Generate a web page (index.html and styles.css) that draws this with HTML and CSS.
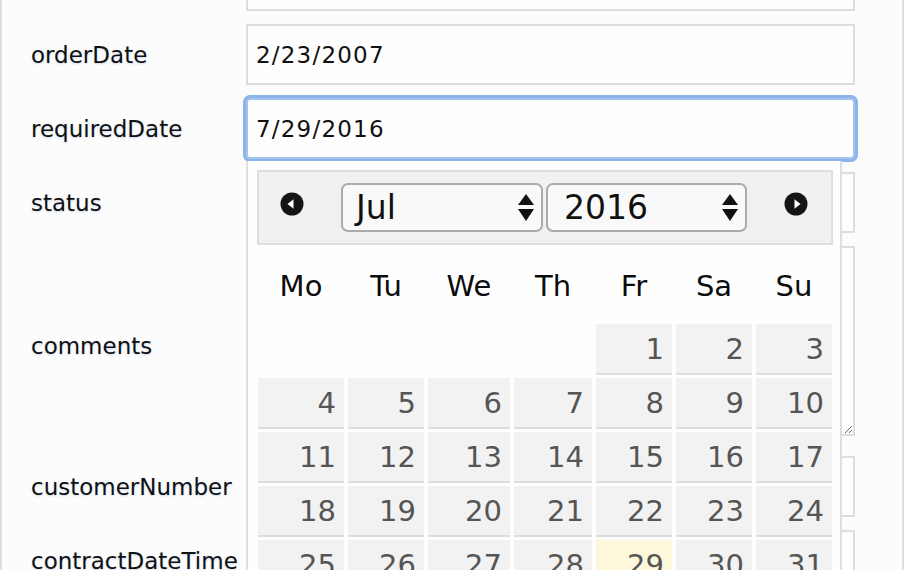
FILE: index.html
```html
<!DOCTYPE html>
<html lang="en">
<head>
<meta charset="utf-8">
<title>Order form with date picker</title>
<link rel="stylesheet" href="styles.css">
</head>
<body>
<div class="page">
  <form class="form">
    <div class="row"><label class="label"></label><input class="field" value=""></div>
    <div class="row"><label class="label">orderDate</label><input class="field" value="2/23/2007"></div>
    <div class="row"><label class="label">requiredDate</label><input class="field focused" value="7/29/2016"></div>
    <div class="row"><label class="label">status</label><input class="field" value=""></div>
    <div class="row row-tall"><label class="label label-area">comments</label><textarea class="field area"></textarea></div>
    <div class="row"><label class="label">customerNumber</label><input class="field" value=""></div>
    <div class="row"><label class="label">contractDateTime</label><input class="field" value=""></div>
  </form>

  <div class="datepicker">
    <div class="dp-header">
      <span class="nav nav-prev">
        <svg width="24" height="24" viewBox="0 0 24 24"><circle cx="12" cy="12" r="11.5" fill="#151515"/><polygon points="7.5,12 13.5,7.2 13.5,16.8" fill="#fff"/></svg>
      </span>
      <div class="select select-month"><span>Jul</span>
        <svg width="16" height="27" viewBox="0 0 16 27"><polygon points="8,0 16,11 0,11" fill="#111"/><polygon points="0,15 16,15 8,27" fill="#111"/></svg>
      </div>
      <div class="select select-year"><span>2016</span>
        <svg width="16" height="27" viewBox="0 0 16 27"><polygon points="8,0 16,11 0,11" fill="#111"/><polygon points="0,15 16,15 8,27" fill="#111"/></svg>
      </div>
      <span class="nav nav-next">
        <svg width="24" height="24" viewBox="0 0 24 24"><circle cx="12" cy="12" r="11.5" fill="#151515"/><polygon points="16.5,12 10.5,7.2 10.5,16.8" fill="#fff"/></svg>
      </span>
    </div>
    <div class="weekdays">
      <span>Mo</span><span>Tu</span><span>We</span><span>Th</span><span>Fr</span><span>Sa</span><span>Su</span>
    </div>
    <div class="days">
      <span class="day empty"></span><span class="day empty"></span><span class="day empty"></span><span class="day empty"></span>
      <span class="day">1</span><span class="day">2</span><span class="day">3</span>
      <span class="day">4</span><span class="day">5</span><span class="day">6</span><span class="day">7</span><span class="day">8</span><span class="day">9</span><span class="day">10</span>
      <span class="day">11</span><span class="day">12</span><span class="day">13</span><span class="day">14</span><span class="day">15</span><span class="day">16</span><span class="day">17</span>
      <span class="day">18</span><span class="day">19</span><span class="day">20</span><span class="day">21</span><span class="day">22</span><span class="day">23</span><span class="day">24</span>
      <span class="day">25</span><span class="day">26</span><span class="day">27</span><span class="day">28</span><span class="day today">29</span><span class="day">30</span><span class="day">31</span>
    </div>
  </div>
</div>
</body>
</html>
```
FILE: styles.css
```css
html, body {
  margin: 0;
  padding: 0;
  overflow: hidden;
  background: #fcfcfc;
}

.page {
  position: relative;
  width: 904px;
  height: 570px;
  box-sizing: border-box;
  border-left: 2px solid #dedede;
  border-right: 2px solid #dedede;
  background: #fcfcfc;
  overflow: hidden;
  font-family: "DejaVu Sans", "Liberation Sans", sans-serif;
  color: #111;
}

.form {
  display: flex;
  flex-direction: column;
  gap: 13px;
  margin: -50px 0 0 0;
  padding-left: 29px;
}

.row {
  display: flex;
  align-items: center;
}

.row-tall {
  margin-bottom: 7px;
}

.label {
  flex: none;
  width: 215px;
  font-size: 23px;
  color: #111;
  text-shadow: 0 1px 2px rgba(110, 150, 205, 0.35);
}

.label-area {
  margin-top: 9px;
}

.field {
  flex: none;
  width: 609px;
  height: 61px;
  box-sizing: border-box;
  margin: 0;
  padding: 1px 8px 0 8px;
  border: 2px solid #dddddd;
  border-radius: 0;
  background: #fefefe;
  font-family: "DejaVu Sans", "Liberation Sans", sans-serif;
  font-size: 23px;
  letter-spacing: 1.2px;
  color: #111;
  outline: none;
}

.field.focused {
  border-color: #a4c4ee;
  border-radius: 4px;
  box-shadow: 0 0 0 3px #8cb4e8;
}

.area {
  height: 190px;
  resize: vertical;
}

.datepicker {
  position: absolute;
  left: 244px;
  top: 161px;
  width: 596px;
  box-sizing: border-box;
  border: 2px solid #dedede;
  border-top: none;
  background: #fefefe;
  padding: 9px 7px 0 9px;
}

.dp-header {
  display: flex;
  align-items: center;
  height: 75px;
  box-sizing: border-box;
  border: 2px solid #dedede;
  background: #f1f1f1;
}

.nav {
  display: flex;
  width: 24px;
  height: 24px;
  margin-top: -7px;
}

.nav-prev {
  margin-left: 21px;
}

.nav-next {
  margin-left: 37px;
}

.select {
  display: flex;
  align-items: center;
  justify-content: space-between;
  height: 49px;
  box-sizing: border-box;
  border: 2px solid #ababab;
  border-radius: 7px;
  background: #f9f9f9;
  padding: 0 7px 0 13px;
  font-size: 33px;
  color: #111;
}

.select-month {
  width: 202px;
  margin-left: 37px;
}

.select-year {
  width: 201px;
  margin-left: 3px;
  padding-left: 16px;
}

.weekdays,
.days {
  display: grid;
  grid-template-columns: 86px 76px 82px 78px 76px 76px 76px;
  column-gap: 4px;
  margin-left: 1px;
}

.weekdays {
  height: 60px;
  margin-top: 11px;
  align-items: center;
  text-align: center;
  font-size: 29px;
  color: #0c0c0c;
}

.days {
  margin-top: 8px;
  row-gap: 3px;
  grid-auto-rows: 51px;
}

.day {
  display: flex;
  align-items: center;
  justify-content: flex-end;
  box-sizing: border-box;
  padding: 0 8px 0 0;
  background: #f2f2f2;
  border-bottom: 2px solid #dcdcdc;
  font-size: 29px;
  color: #555;
}

.day.empty {
  background: none;
  border: none;
}

.day.today {
  background: #fdf7dc;
}
```
